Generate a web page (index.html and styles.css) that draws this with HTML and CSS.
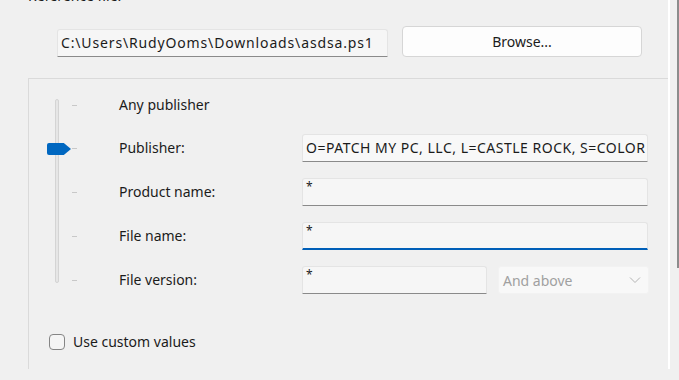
FILE: index.html
```html
<!DOCTYPE html>
<html>
<head>
<meta charset="utf-8">
<link rel="stylesheet" href="styles.css">
</head>
<body>
<div class="screen">
  <div class="frame">
    <div class="ref-label">Reference file:</div>
    <div class="file-row">
      <div class="textbox file-box"><span class="path">C:\Users\RudyOoms\Downloads\asdsa.ps1</span></div>
      <button class="browse">Browse...</button>
    </div>
    <div class="group">
      <div class="slider">
        <div class="thumb"></div>
      </div>
      <div class="content">
        <div class="fields">
          <span class="tick"></span>
          <span class="label">Any publisher</span>
          <span></span>

          <span class="tick"></span>
          <span class="label">Publisher:</span>
          <div class="textbox field active"><span class="caps">O=PATCH MY PC, LLC, L=CASTLE ROCK, S=COLOR</span></div>

          <span class="tick"></span>
          <span class="label">Product name:</span>
          <div class="textbox field"><span class="star">*</span></div>

          <span class="tick"></span>
          <span class="label">File name:</span>
          <div class="textbox field focused"><span class="star">*</span></div>

          <span class="tick"></span>
          <span class="label">File version:</span>
          <div class="version-row">
            <div class="textbox field version"><span class="star">*</span></div>
            <div class="dropdown">
              <span>And above</span>
              <svg class="chev" width="12" height="8" viewBox="0 0 12 8"><path d="M1 1.5 L6 6.5 L11 1.5" fill="none" stroke="#b4b4b4" stroke-width="1"/></svg>
            </div>
          </div>
        </div>
        <label class="check-row">
          <span class="checkbox"></span>
          <span>Use custom values</span>
        </label>
      </div>
    </div>
  </div>
  <div class="edge"></div>
</div>
</body>
</html>
```

FILE: styles.css
```css
html, body {
  margin: 0;
  padding: 0;
  background: #f0f0f0;
  overflow: hidden;
}
body {
  font-family: "Noto Sans", "Open Sans", sans-serif;
  font-size: 14px;
  color: #1b1b1b;
}
.screen {
  display: flex;
  align-items: flex-start;
  width: 679px;
  height: 380px;
}
.frame {
  width: 668px;
  height: 369px;
  border-right: 2px solid #ffffff;
  box-sizing: content-box;
  display: flex;
  flex-direction: column;
}
.edge {
  margin-left: 7px;
  width: 2px;
  height: 268px;
  background: #8c8c8c;
}
.ref-label {
  margin-top: -14px;
  margin-left: 28px;
  line-height: 20px;
  height: 20px;
}
.file-row {
  display: flex;
  align-items: center;
  margin-top: 20px;
  padding-left: 57px;
  gap: 14px;
}
.textbox {
  box-sizing: border-box;
  height: 28px;
  background: #f6f6f6;
  border: 1px solid #e4e4e4;
  border-bottom: 1px solid #8a8a8a;
  border-radius: 3px 3px 0 0;
  padding: 0 3px;
  line-height: 26px;
  white-space: nowrap;
  overflow: hidden;
}
.file-box {
  width: 331px;
  margin-top: 2px;
}
.path {
  letter-spacing: 0.85px;
}
.caps {
  letter-spacing: 0.5px;
}
.star {
  display: block;
  font-size: 12px;
  line-height: 16px;
}
.browse {
  box-sizing: border-box;
  width: 240px;
  height: 31px;
  background: #fdfdfd;
  border: 1px solid #d6d6d6;
  border-radius: 4px;
  font-family: inherit;
  font-size: 14px;
  color: #1b1b1b;
  padding: 0;
}
.group {
  margin-top: 21px;
  margin-left: 28px;
  flex: 1;
  border-top: 1px solid #dadada;
  border-left: 1px solid #dadada;
  display: flex;
  padding-left: 26px;
}
.slider {
  position: relative;
  width: 4px;
  height: 184px;
  margin-top: 20px;
  box-sizing: border-box;
  background: #e6e6e6;
  border: 1px solid #d4d4d4;
  border-radius: 2px;
}
.thumb {
  position: absolute;
  left: -9px;
  top: 43px;
  width: 24px;
  height: 12px;
  background: #0067c0;
  clip-path: polygon(0 0, 70% 0, 100% 50%, 70% 100%, 0 100%);
  border-radius: 2px 0 0 2px;
}
.content {
  display: flex;
  flex-direction: column;
}
.fields {
  margin-top: 13px;
  margin-left: 13px;
  display: grid;
  grid-template-columns: 47px 183px 346px;
  grid-template-rows: 26px 28px 28px 28px 28px;
  row-gap: 16px;
  align-items: center;
}
.tick {
  width: 5px;
  height: 1px;
  background: #c8c8c8;
}
.label {
  line-height: 20px;
}
.field {
  width: 346px;
}
.active {
  background: #f8f8f8;
}
.focused {
  border-bottom: 2px solid #005fb8;
  line-height: 24px;
}
.version-row {
  display: flex;
  gap: 11px;
  width: 347px;
}
.version {
  width: 185px;
}
.dropdown {
  box-sizing: border-box;
  width: 151px;
  height: 28px;
  background: #f8f8f8;
  border: 1px solid #f2f2f2;
  border-radius: 3px;
  color: #a0a0a0;
  display: flex;
  align-items: center;
  justify-content: space-between;
  padding: 0 7px 0 4px;
}
.chev {
  display: block;
}
.check-row {
  margin-top: 38px;
  margin-left: -10px;
  display: flex;
  align-items: center;
  gap: 8px;
}
.checkbox {
  box-sizing: border-box;
  width: 16px;
  height: 16px;
  border: 1px solid #858585;
  border-radius: 4px;
  background: #f5f5f5;
}
```
